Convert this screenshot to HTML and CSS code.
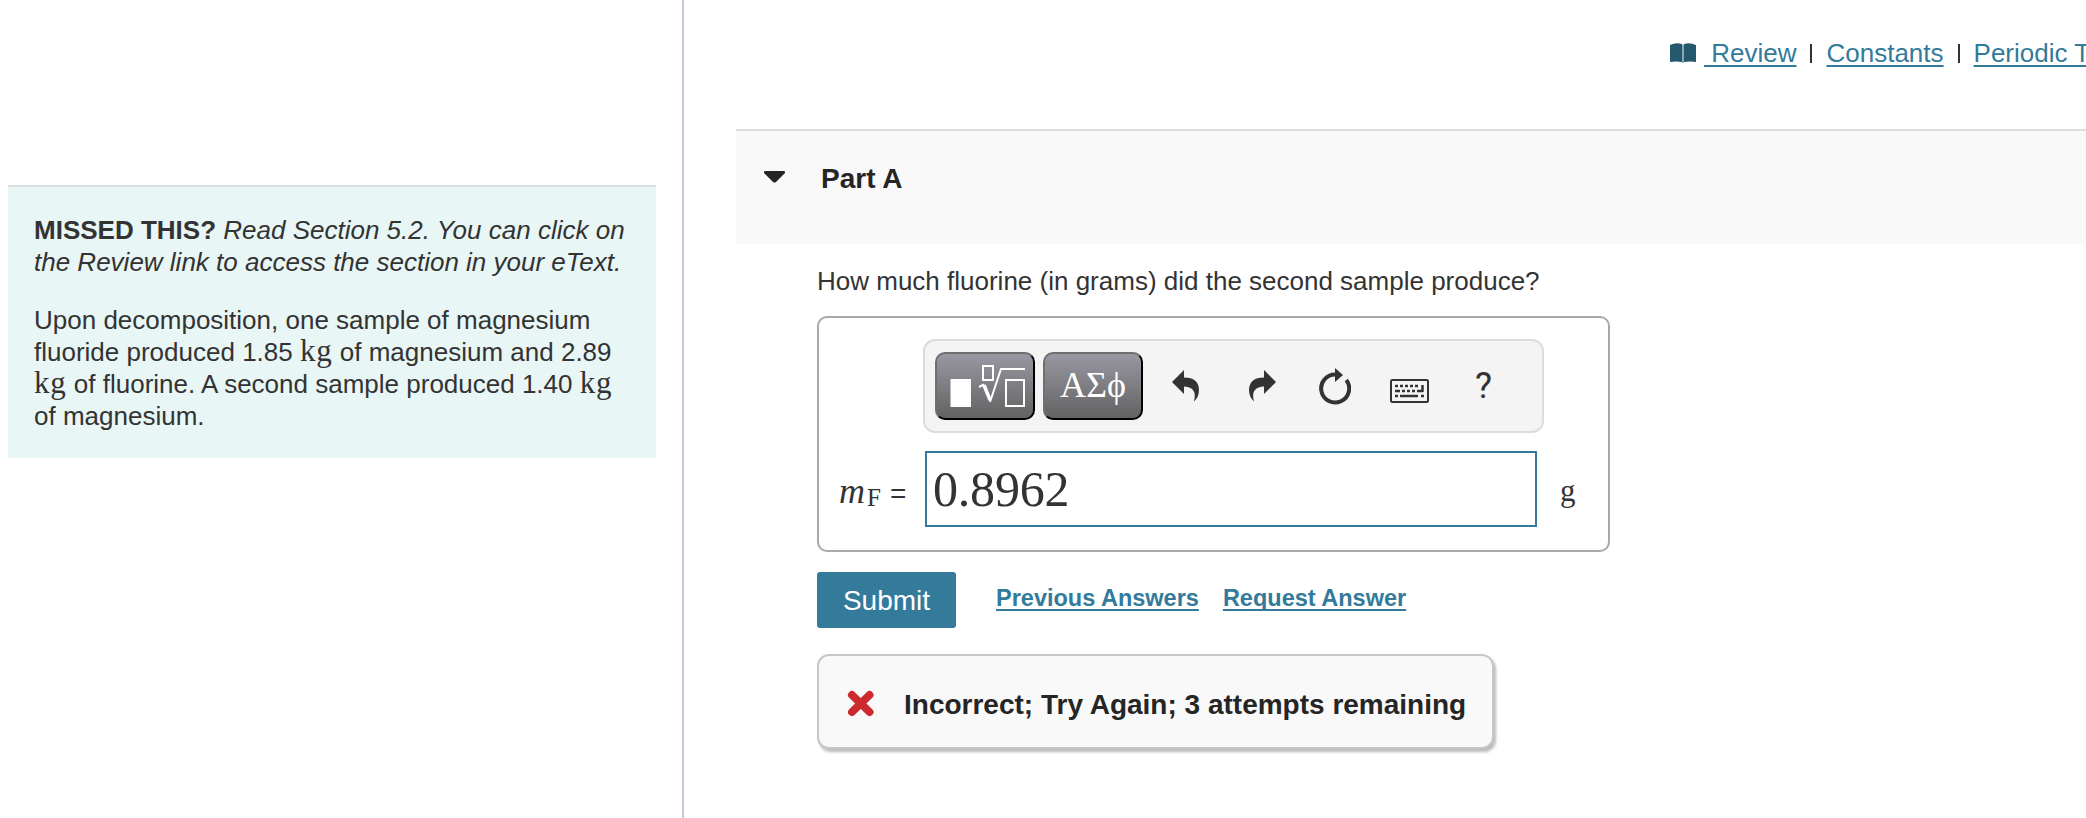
FILE: index.html
```html
<!DOCTYPE html>
<html lang="en">
<head>
    <meta charset="UTF-8">
    <meta name="viewport" content="width=device-width, initial-scale=1.0">
    <title>Part A</title>
    <link rel="stylesheet" href="styles.css">
</head>
<body>
    <div class="page">
      <aside class="intro">
        <div class="problem">
          <p class="hint"><strong>MISSED THIS?</strong> <em>Read Section 5.2. You can click on<br>the Review link to access the section in your eText.</em></p>
          <p class="statement">Upon decomposition, one sample of magnesium<br>fluoride produced 1.85 <span class="unit">kg</span> of magnesium and 2.89<br><span class="unit">kg</span> of fluorine. A second sample produced 1.40 <span class="unit">kg</span><br>of magnesium.</p>
        </div>
      </aside>
      <main>
        <nav class="resources">
          <svg class="book" width="26" height="20" viewBox="0 0 26 20">
            <path fill="#24596d" d="M0 2Q6-1 12 1V19Q6 18 0 19Z M14 1Q20-1 26 2V19Q20 18 14 19Z"/>
            <path fill="#8ba9b4" d="M12 1.500H14V20H12Z"/>
          </svg>
          <a class="review" href="#">&nbsp;Review</a>
          <span class="bar"></span>
          <a class="constants" href="#">Constants</a>
          <span class="bar"></span>
          <a class="periodic" href="#">Periodic Table</a>
        </nav>
        <header class="part-header">
          <svg class="caret" width="22" height="12" viewBox="0 0 22 12"><path fill="#252525" d="M1 0H20Q22 0.500 20.500 2.500L12 11Q10.500 12 9 11L0.500 2.500Q-1 0.500 1 0Z"/></svg>
          <h2>Part A</h2>
        </header>
        <section class="part-body">
          <p class="question">How much fluorine (in grams) did the second sample produce?</p>
          <div class="answer">
            <div class="toolbar">
              <button class="key" type="button">
                <svg width="96" height="64" viewBox="0 0 96 64">
                  <path fill="#fff" d="M13.500 25H34V53H13.500Z"/>
                  <path fill="none" stroke="#fff" stroke-width="2" d="M46 12H56V26H46Z M69 26H87V52H69Z"/>
                  <path fill="none" stroke="#fff" stroke-width="2" d="M42 33L47 30.500"/>
                  <path fill="none" stroke="#fff" stroke-width="3.500" d="M47 31L53 46"/>
                  <path fill="none" stroke="#fff" stroke-width="2" d="M53 48L64 15H88"/>
                </svg>
              </button>
              <button class="key greek" type="button">ΑΣϕ</button>
              <svg class="undo" width="28" height="32" viewBox="0 0 28 32"><path fill="#333" d="M0 12L12 0V7.500C22 7.500 27 12 27 20C27 25 25 29 22 31.500C24 24 23 17 12 16.500V24Z"/></svg>
              <svg class="redo" width="28" height="32" viewBox="0 0 28 32"><path fill="#333" d="M27 12L15 0V7.500C5 7.500 0 12 0 20C0 25 2 29 5 31.500C3 24 4 17 15 16.500V24Z"/></svg>
              <svg class="reset" width="32" height="37" viewBox="0 0 32 37">
                <path fill="none" stroke="#333" stroke-width="4" d="M16.500 6.500A14 14 0 1 0 27.300 12"/>
                <path fill="#333" d="M16 0L24 7L16 14Z"/>
              </svg>
              <svg class="keyboard" width="39" height="24" viewBox="0 0 39 24">
                <rect x="1" y="1" width="37" height="22" rx="1.500" fill="none" stroke="#333" stroke-width="2"/>
                <path fill="none" stroke="#333" stroke-width="2.500" d="M5 7H8M10 7H13M15 7H18M20 7H23M25 7H28M5 12H10M12 12H15M17 12H20M22 12H25M27 12H33M5 17H8M10 17H28M31 17H34M32.500 6V13"/>
              </svg>
              <span class="help">?</span>
            </div>
            <div class="entry">
              <span class="label"><i>m</i><sub>F</sub><b>=</b></span>
              <div class="field">0.8962</div>
              <span class="suffix">g</span>
            </div>
          </div>
          <div class="actions">
            <button class="submit" type="button">Submit</button>
            <a class="previous" href="#">Previous Answers</a>
            <a class="request" href="#">Request Answer</a>
          </div>
          <div class="feedback">
            <svg width="28" height="27" viewBox="0 0 28 27"><path fill="none" stroke="#cb2a2e" stroke-width="8" stroke-linecap="round" d="M5 5L22.500 22M22.500 5L5 22"/></svg>
            <span>Incorrect; Try Again; 3 attempts remaining</span>
          </div>
        </section>
      </main>
    </div>
</body>
</html>
```
FILE: styles.css
```css
* {
  margin: 0;
  padding: 0;
  box-sizing: border-box;
}

body {
  font-family: "Liberation Sans", Arial, Helvetica, sans-serif;
  font-size: 26px;
  color: #333;
  background-color: #fff;
  overflow: hidden;
}

a {
  color: #337a9b;
  text-decoration: underline;
  text-decoration-thickness: 2px;
  text-underline-offset: 3px;
  text-decoration-skip-ink: none;
  white-space: nowrap;
}

svg {
  display: block;
  flex: none;
}

.page {
  display: flex;
  width: 2086px;
  height: 818px;
}

.intro {
  flex: none;
  width: 684px;
  padding: 185px 26px 0 8px;
  border-right: 2px solid #c0cad8;
}

.problem {
  height: 273px;
  padding: 27px 0 0 26px;
  border-top: 2px solid #dbdfdd;
  background-color: #e8f6f5;
  line-height: 32.3px;
  white-space: nowrap;
}

.statement {
  margin-top: 25px;
}

.unit {
  font-family: "Liberation Serif", "Times New Roman", serif;
  font-size: 31px;
  letter-spacing: 0.8px;
  line-height: 1px;
}

main {
  flex: 1;
  min-width: 0;
  padding-left: 52px;
  overflow: hidden;
}

.resources {
  display: flex;
  align-items: center;
  height: 129px;
  padding: 0 0 23px 934px;
}

.review {
  margin-left: 8px;
}

.bar {
  flex: none;
  width: 2px;
  height: 19px;
  margin: 0 14px;
  background-color: #333;
}

.part-header {
  display: flex;
  height: 115px;
  padding: 32px 0 0 28px;
  border-top: 2px solid #dcdcdc;
  background-color: #f9f9f9;
}

.caret {
  margin-top: 8px;
}

.part-header h2 {
  margin-left: 35px;
  font-size: 28px;
  line-height: 32px;
  color: #252525;
}

.part-body {
  padding: 21px 0 0 81px;
}

.question {
  line-height: 32px;
}

.answer {
  width: 793px;
  height: 236px;
  margin-top: 19px;
  padding: 21px 0 0 104px;
  border: 2px solid #a9a9a9;
  border-radius: 10px;
}

.toolbar {
  display: flex;
  width: 621px;
  height: 94px;
  padding: 11px 0 0 10px;
  border: 2px solid #dcdcdc;
  border-radius: 12px;
  background-color: #f4f4f4;
}

.key {
  width: 100px;
  height: 68px;
  border: 2px outset #777;
  border-color: #6f6f6f #1c1c1c #1c1c1c #6f6f6f;
  border-radius: 10px;
  background: linear-gradient(#9998a3, #626262);
  color: #fff;
}

.greek {
  margin-left: 8px;
  padding-bottom: 2px;
  font-family: "Liberation Serif", "Times New Roman", serif;
  font-size: 36px;
}

.undo {
  margin: 18px 0 0 29px;
}

.redo {
  margin: 18px 0 0 49px;
}

.reset {
  margin: 16px 0 0 42px;
}

.keyboard {
  margin: 27px 0 0 39px;
}

.help {
  margin: 13px 0 0 46px;
  font-family: Roboto, sans-serif;
  font-size: 36px;
  line-height: 42px;
}

.entry {
  display: flex;
  align-items: center;
  margin: 18px 0 0 -104px;
}

.label {
  display: flex;
  align-items: baseline;
  width: 106px;
  padding: 4px 0 0 20px;
  font-family: "Liberation Serif", "Times New Roman", serif;
  font-size: 34px;
}

.label i {
  font-size: 36px;
}

.label sub {
  position: relative;
  top: 3px;
  margin-left: 2px;
  font-size: 25px;
  vertical-align: baseline;
}

.label b {
  margin-left: 9px;
  font-family: "Liberation Sans", Arial, sans-serif;
  font-size: 28px;
  font-weight: normal;
}

.field {
  width: 612px;
  height: 76px;
  padding-left: 6px;
  border: 2px solid #337a9b;
  font-family: "Liberation Serif", "Times New Roman", serif;
  font-size: 50px;
  letter-spacing: -0.2px;
  line-height: 72px;
}

.suffix {
  margin: 3px 0 0 23px;
  font-family: "Liberation Serif", "Times New Roman", serif;
  font-size: 31px;
}

.actions {
  display: flex;
  margin-top: 20px;
  font-size: 23.500px;
  font-weight: bold;
  line-height: 52px;
}

.submit {
  width: 139px;
  height: 56px;
  padding-top: 2px;
  border: none;
  border-radius: 3px;
  background-color: #337a9b;
  color: #fff;
  font-family: inherit;
  font-size: 28px;
}

.previous {
  margin-left: 40px;
}

.request {
  margin-left: 24px;
}

.feedback {
  display: flex;
  align-items: center;
  width: 677px;
  height: 95px;
  margin-top: 26px;
  padding: 4px 0 0 28px;
  border: 2px solid #c6c7c7;
  border-radius: 12px;
  background-color: #f9f9f9;
  box-shadow: 2px 3px 3px #bbb;
  color: #252525;
  font-size: 28px;
  font-weight: bold;
  white-space: nowrap;
}

.feedback span {
  margin: 3px 0 0 29px;
}
```
